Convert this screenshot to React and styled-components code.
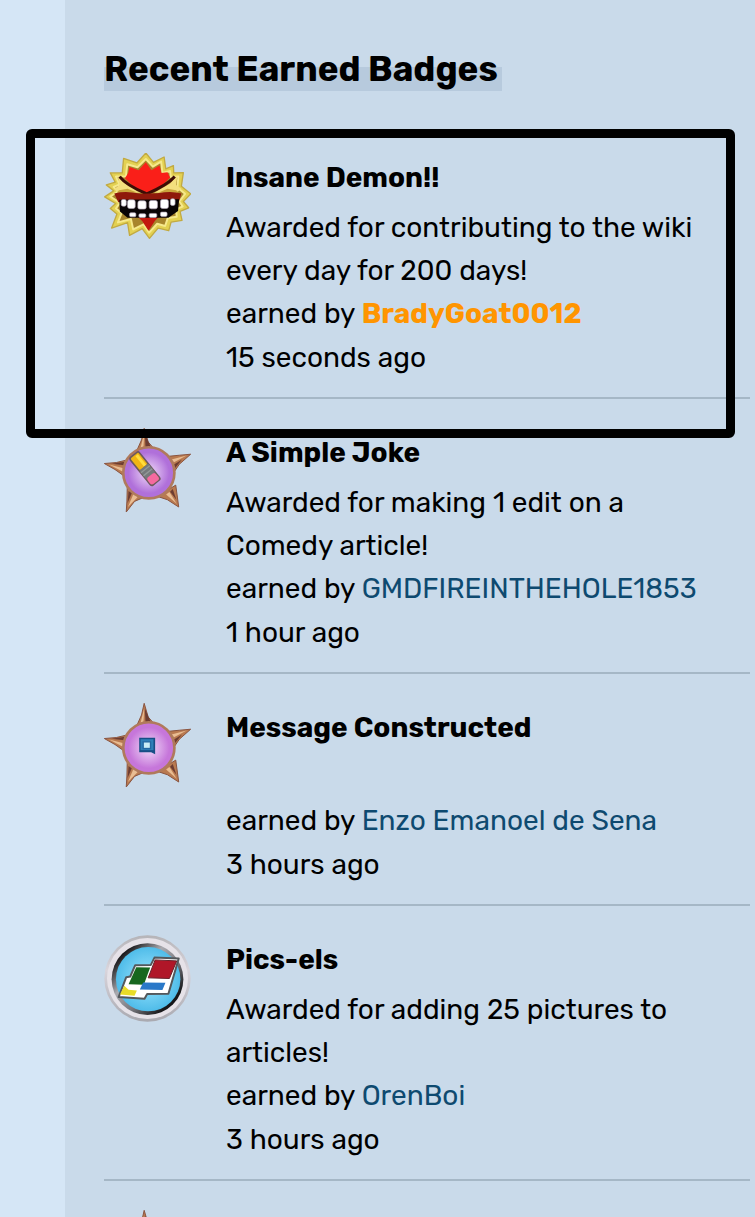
import React from "react";
import styled, { createGlobalStyle, css } from "styled-components";

const FONT_STACK_BASE = `"Rubik", "Inter", "Liberation Sans", sans-serif`;
const COLOR_PAGE = "#d5e6f6";
const COLOR_PANEL = "#c9daea";
const COLOR_STRIPE = "#b7cadd";
const COLOR_KEYLINE = "#a5b7c6";
const COLOR_LINK = "#0e4a70";
const COLOR_STAFF = "#ff9500";

const badges = [
  {
    name: "Insane Demon!!",
    detail: "Awarded for contributing to the wiki every day for 200 days!",
    user: "BradyGoat0012",
    time: "15 seconds ago",
    icon: DemonBadge,
    staff: true,
    highlighted: true
  },
  {
    name: "A Simple Joke",
    detail: "Awarded for making 1 edit on a Comedy article!",
    user: "GMDFIREINTHEHOLE1853",
    time: "1 hour ago",
    icon: PencilBadge
  },
  {
    name: "Message Constructed",
    detail: "",
    user: "Enzo Emanoel de Sena",
    time: "3 hours ago",
    icon: MessageBadge
  },
  {
    name: "Pics-els",
    detail: "Awarded for adding 25 pictures to articles!",
    user: "OrenBoi",
    time: "3 hours ago",
    icon: PicturesBadge
  },
  { icon: StarBadge }
];

export default function App() {
  return (
    <Page>
      <GlobalStyle />
      <Panel>
        <Heading>
          <HeadingText>Recent Earned Badges</HeadingText>
        </Heading>
        <List>
          {badges.map((badge, i) => (
            <Badge key={i} {...badge} />
          ))}
        </List>
      </Panel>
    </Page>
  );
}

function Badge({ name, detail, user, time, icon: Icon, staff, highlighted }) {
  return (
    <Item $highlighted={highlighted}>
      <Icon />
      {name && (
        <Body>
          <Name>{name}</Name>
          <Detail>{detail}</Detail>
          <Meta>
            earned by{" "}
            <UserLink href="#" $staff={staff}>
              {user}
            </UserLink>
          </Meta>
          <Meta>{time}</Meta>
        </Body>
      )}
    </Item>
  );
}

function DemonBadge() {
  return (
    <Picture viewBox="27 38 262 262" aria-hidden="true">
      {/* gold spikes */}
      <path
        fill="#e3d152"
        stroke="#c2aa42"
        strokeWidth="4"
        strokeLinejoin="round"
        d="M153 38 L176 66 L208 50 L213 86 L236 76 L237 98 L266 97 L260 138 L288 161 L266 184 L282 203 L256 214 L262 241 L229 246 L222 272 L190 264 L164 295 L142 266 L104 286 L98 248 L50 264 L66 222 L46 205 L62 190 L29 170 L56 152 L34 134 L61 126 L46 98 L82 98 L86 54 L126 68 Z"
      />
      <path
        fill="#a8852c"
        stroke="#f6e98c"
        strokeWidth="6"
        strokeLinejoin="round"
        d="M153 56 L174 79 L199 64 L203 98 L226 92 L228 110 L251 109 L248 142 L271 161 L254 184 L264 199 L244 207 L246 230 L219 234 L211 258 L187 251 L163 278 L146 253 L115 268 L108 237 L69 247 L80 219 L63 205 L75 188 L46 169 L69 154 L56 140 L74 133 L63 109 L93 109 L97 72 L128 81 Z"
      />
      {/* face */}
      <path
        fill="#fa1f19"
        d="M153 66 L170 90 L194 76 L200 98 L218 96 L226 112 L200 138 L157 158 L116 140 L90 114 L100 98 L104 80 L131 90 Z"
      />
      <path fill="#f3df7e" d="M68 106 L90 130 L140 158 H72 L58 146 L74 134 Z" />
      <path fill="#f3df7e" d="M248 106 L226 130 L178 158 H246 L260 146 L244 134 Z" />
      <path
        fill="none"
        stroke="#3d0c05"
        strokeWidth="9"
        strokeLinejoin="round"
        d="M74 109 Q94 135 156 161 Q218 135 240 109"
      />
      <path fill="#c9a53c" d="M72 150 L98 146 L126 157 H66 Z M244 150 L218 146 L192 157 H252 Z" />
      <path fill="#8f180b" d="M58 160 Q92 151 137 161 L188 159 Q232 151 260 160 L252 186 L70 186 Z" />
      <path fill="#c3190f" d="M126 228 H194 L180 243 L161 272 L142 243 Z" />
      <path fill="#090405" d="M73 179 L253 177 L250 213 L221 233 L98 233 L75 214 Z" />
      <g fill="#fff" stroke="#b3a6b8" strokeWidth="2">
        <rect x="79" y="178" width="15" height="20" rx="5" />
        <rect x="98" y="179" width="23" height="26" rx="6" />
        <rect x="129" y="182" width="25" height="25" rx="6" />
        <rect x="163" y="181" width="25" height="25" rx="6" />
        <rect x="197" y="178" width="24" height="27" rx="6" />
        <rect x="227" y="176" width="14" height="20" rx="5" />
        <rect x="104" y="218" width="19" height="12" rx="4" />
        <rect x="132" y="221" width="21" height="11" rx="4" />
        <rect x="163" y="220" width="23" height="12" rx="4" />
        <rect x="197" y="216" width="20" height="13" rx="4" />
      </g>
    </Picture>
  );
}

function StarBadge({ id = "star", tint = "#bd7ed6", children }) {
  return (
    <Picture viewBox="27 24 262 262" aria-hidden="true">
      <defs>
        <radialGradient id={id}>
          <stop offset="0" stopColor="#f0dcf8" />
          <stop offset="0.8" stopColor={tint} />
          <stop offset="1" stopColor={tint} />
        </radialGradient>
      </defs>
      <g fill="#b97a50" stroke="#8a5440" strokeWidth="3" strokeLinejoin="round">
        <path d="M148 25 L140 60 L124 96 L186 96 L160 66 Z" />
        <path d="M288 103 L254 106 L214 110 L239 155 L254 133 Z" />
        <path d="M252 262 L248 232 L243 196 L188 230 L218 240 Z" />
        <path d="M94 277 L96 244 L97 204 L149 232 L119 245 Z" />
        <path d="M28 131 L64 128 L106 118 L84 166 L60 149 Z" />
      </g>
      <g fill="#e9bd93">
        <path d="M148 40 L137 84 L146 80 Z" />
        <path d="M276 107 L238 127 L230 119 Z" />
        <path d="M246 252 L214 224 L224 217 Z" />
        <path d="M99 262 L116 222 L130 230 Z" />
        <path d="M42 134 L86 145 L84 156 Z" />
      </g>
      <g fill="#6d3c31">
        <path d="M150 40 L152 82 L168 82 Z" />
        <path d="M262 119 L238 134 L240 146 Z" />
        <path d="M245 240 L234 208 L226 216 Z" />
        <path d="M98 250 L101 214 L111 220 Z" />
        <path d="M50 132 L90 126 L88 136 Z" />
      </g>
      <circle cx="162" cy="159" r="77" fill={`url(#${id})`} stroke="#b07a5c" strokeWidth="8" />
      {children}
    </Picture>
  );
}

function PencilBadge() {
  return (
    <StarBadge id="starPencil" tint="#b070da">
      <g transform="translate(149 145) rotate(51)">
        <rect x="-54" y="-20" width="112" height="40" rx="9" fill="#6d5a5c" />
        <rect x="-49" y="-15" width="45" height="30" rx="4" fill="#f0b514" />
        <path d="M-45 -6 H-5" stroke="#ffdd3d" strokeWidth="9" />
        <rect x="-4" y="-17" width="34" height="34" fill="#74797c" />
        <path d="M4 -17 V17 M16 -17 V17" stroke="#939899" strokeWidth="4" />
        <rect x="28" y="-16" width="26" height="32" rx="8" fill="#f56a9f" />
      </g>
    </StarBadge>
  );
}

function MessageBadge() {
  return (
    <StarBadge id="starMessage" tint="#c676da">
      <path fill="#174e85" d="M133 129 H181 V178 L169 172 H133 Z" />
      <path fill="#2e7fb8" d="M137 133 H176 V166 H137 Z" />
      <rect x="145" y="141" width="22" height="20" fill="#c8edf6" stroke="#2268a2" strokeWidth="4" />
    </StarBadge>
  );
}

function PicturesBadge() {
  return (
    <Picture viewBox="27 29 262 262" aria-hidden="true">
      <defs>
        <linearGradient id="rim" x2="0" y2="1">
          <stop offset="0" stopColor="#b5b4b8" />
          <stop offset="0.4" stopColor="#d9d5dc" />
          <stop offset="1" stopColor="#a9a9b0" />
        </linearGradient>
        <linearGradient id="innerRim" x2="1" y2="1">
          <stop offset="0.15" stopColor="#171719" />
          <stop offset="0.38" stopColor="#aaaab0" />
          <stop offset="0.6" stopColor="#77777d" />
          <stop offset="0.82" stopColor="#171719" />
        </linearGradient>
        <radialGradient id="sky">
          <stop offset="0" stopColor="#9ee6ff" />
          <stop offset="1" stopColor="#4fbce9" />
        </radialGradient>
      </defs>
      <circle cx="158" cy="160" r="130" fill="url(#rim)" />
      <circle cx="158" cy="160" r="122" fill="#e6e2e8" />
      <circle cx="158" cy="162" r="108" fill="url(#innerRim)" />
      <circle cx="160" cy="162" r="97" fill="url(#sky)" />
      <path
        fill="#fff"
        stroke="#54585c"
        strokeWidth="6"
        strokeLinejoin="round"
        d="M121 120 L168 119 L179 97 L252 100 L221 206 L157 207 L149 221 L71 216 L94 156 L106 154 Z"
      />
      <path fill="#17671f" d="M124 126 L166 127 L147 179 L101 177 Z" />
      <path fill="#b01628" stroke="#66202a" strokeWidth="3" d="M181 104 L246 107 L224 160 L160 158 Z" />
      <path fill="#e8dc28" d="M88 182 L101 194 L126 196 L119 212 L75 208 Z" />
      <path fill="#2a78c8" d="M145 172 L212 173 L203 195 L135 193 Z" />
    </Picture>
  );
}

const GlobalStyle = createGlobalStyle`
  * {
    box-sizing: border-box;
  }

  body {
    margin: 0;
    background: ${COLOR_PAGE};
  }
`;

const Page = styled.div`
  height: 100vh;
  overflow: hidden;
  padding-left: 65px;
  font-family: ${FONT_STACK_BASE};
  font-size: 28px;
  color: #000;
`;

const Panel = styled.main`
  min-height: 100%;
  padding: 47px 5px 0 39px;
  background: ${COLOR_PANEL};
`;

const Heading = styled.h2`
  margin: 0 0 33px;
  font-size: 35px;
  font-weight: 700;
  line-height: 44px;
`;

const HeadingText = styled.span`
  display: inline-block;
  padding-right: 4px;
  background: linear-gradient(transparent 20px, ${COLOR_STRIPE} 20px);
`;

const List = styled.ul`
  margin: 0;
  padding: 0;
  list-style: none;
`;

const Item = styled.li`
  position: relative;
  display: flex;
  align-items: flex-start;
  gap: 35px;
  padding: 29px 0 17px;
  border-bottom: 2px solid ${COLOR_KEYLINE};

  ${({ $highlighted }) =>
    $highlighted &&
    css`
      &::after {
        content: "";
        position: absolute;
        z-index: 1;
        inset: 5px 15px -41px -78px;
        border: 9px solid #000;
        border-radius: 6px;
        pointer-events: none;
      }
    `};
`;

const Picture = styled.svg`
  flex: none;
  width: 87px;
  height: 87px;
`;

const Body = styled.div`
  flex: 1;
  min-width: 0;
  padding-right: 36px;
`;

const Name = styled.h3`
  margin: 0 0 3px;
  font-size: 28px;
  font-weight: 700;
  line-height: 50px;
`;

const Detail = styled.p`
  min-height: 43px;
  margin: 0;
  line-height: 43px;
`;

const Meta = styled.div`
  line-height: 44px;
`;

const UserLink = styled.a`
  color: ${({ $staff }) => ($staff ? COLOR_STAFF : COLOR_LINK)};
  font-weight: ${({ $staff }) => ($staff ? 700 : 400)};
  text-decoration: none;
`;
